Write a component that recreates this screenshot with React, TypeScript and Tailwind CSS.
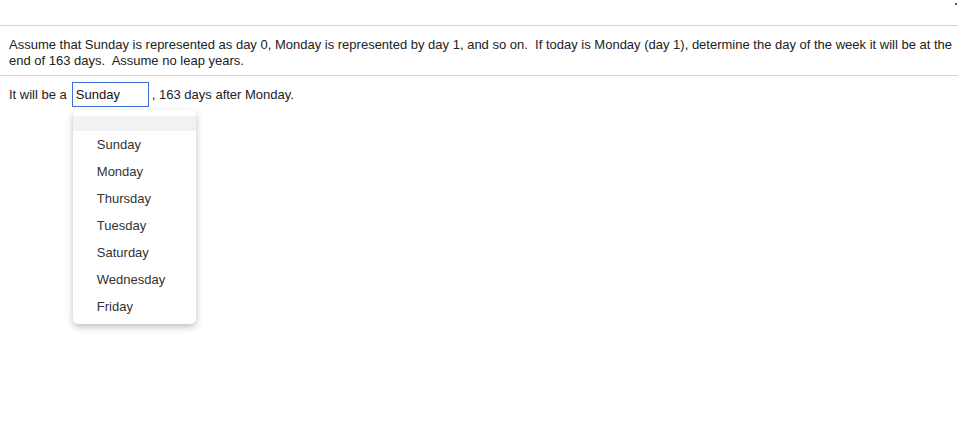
const days = ["Sunday", "Monday", "Thursday", "Tuesday", "Saturday", "Wednesday", "Friday"];

export default function App() {
  return (
    <div className="relative w-[958px] h-[444px] bg-white text-[#222] font-['Liberation_Sans',Arial,sans-serif] overflow-hidden">
      <div className="absolute right-[1px] top-[3px] w-[2px] h-[2px] bg-[#555]" />
      <div className="h-[25px]" />
      <section className="border-t border-b border-[#d3d3da] pt-[11px] pb-[6px] pl-[9px] pr-[4px]">
        <p className="text-[13px] leading-[16px]">
          Assume that Sunday is represented as day 0, Monday is represented by day 1, and so on.&nbsp; If today is Monday (day 1), determine the day of the week it will be at the end of 163 days.&nbsp; Assume no leap years.
        </p>
      </section>

      <div className="flex items-center mt-[6px] pl-[9px] text-[13px]">
        <span>It will be a</span>
        <div className="relative ml-[5px]">
          <div className="w-[77px] h-[25px] border border-[#3a6fd8] flex items-center pl-[3px] text-[13px] text-[#111]">
            Sunday
          </div>
          <ul className="absolute left-[1px] top-[28px] w-[123px] bg-white rounded-[5px] shadow-[0_3px_7px_rgba(0,0,0,0.25)] pt-[6px] pb-[4px] text-[13px] text-[#333] z-10">
            <li className="h-[15px] bg-[#f2f2f2]" />
            {days.map((d) => (
              <li key={d} className="h-[27px] flex items-center pl-[24px]">
                {d}
              </li>
            ))}
          </ul>
        </div>
        <span className="ml-[3px]">, 163 days after Monday.</span>
      </div>
    </div>
  );
}
